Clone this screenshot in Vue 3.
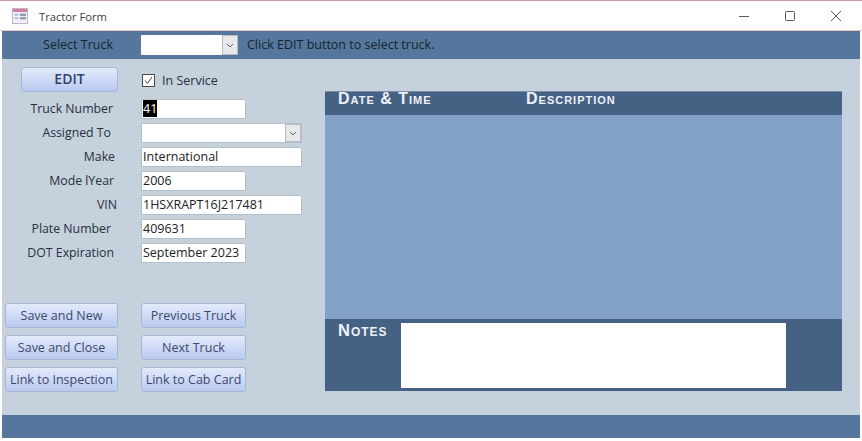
<script setup>
const fields = [
  { label: 'Truck Number', value: '41', nudge: 7, selected: true },
  { label: 'Assigned To', value: '', nudge: 9, wide: true, combo: true },
  { label: 'Make', value: 'International', nudge: 5, wide: true },
  { label: 'Mode lYear', value: '2006', nudge: 6 },
  { label: 'VIN', value: '1HSXRAPT16J217481', nudge: 3, wide: true },
  { label: 'Plate Number', value: '409631', nudge: 9 },
  { label: 'DOT Expiration', value: 'September 2023', nudge: 6 },
]

const actions = [
  ['Save and New', 'Previous Truck'],
  ['Save and Close', 'Next Truck'],
  ['Link to Inspection', 'Link to Cab Card'],
]
</script>

<template>
  <div class="window">
    <header class="titlebar">
      <svg class="app-icon" width="16" height="16" viewBox="0 0 16 16">
        <rect x="0.5" y="0.5" width="15" height="15" fill="#f1f1f5" stroke="#c4b4c6" />
        <rect x="1" y="1" width="14" height="3" fill="#cf7f9f" />
        <rect x="2.5" y="6" width="4" height="1.5" fill="#9fb6d2" />
        <rect x="2.5" y="9.5" width="4" height="1.5" fill="#9fb6d2" />
        <rect x="8" y="5.5" width="6" height="2.5" fill="#8c9fb6" />
        <rect x="8" y="9" width="6" height="2.5" fill="#8c9fb6" />
      </svg>
      <span class="title">Tractor Form</span>
      <div class="window-controls">
        <svg width="12" height="12" viewBox="0 0 12 12"><path d="M1 6.5h10" stroke="#555" fill="none" /></svg>
        <svg width="12" height="12" viewBox="0 0 12 12"><rect x="1.5" y="1.5" width="9" height="9" rx="1" stroke="#555" fill="none" /></svg>
        <svg width="12" height="12" viewBox="0 0 12 12"><path d="M1 1l10 10M11 1L1 11" stroke="#555" fill="none" /></svg>
      </div>
    </header>

    <div class="form">
      <div class="toolbar">
        <span class="select-label">Select Truck</span>
        <div class="combo combo-small">
          <span class="combo-text"></span>
          <span class="combo-arrow">
            <svg width="8" height="5" viewBox="0 0 8 5"><path d="M1 1l3 3 3-3" stroke="#666" fill="none" /></svg>
          </span>
        </div>
        <span class="hint">Click EDIT button to select truck.</span>
      </div>

      <div class="content">
        <div class="left">
          <div class="top-row">
            <button class="btn btn-edit">EDIT</button>
            <label class="check">
              <span class="checkbox">
                <svg width="11" height="11" viewBox="0 0 11 11"><path d="M2 5.5l2.5 3L9 2" stroke="#444" fill="none" /></svg>
              </span>
              In Service
            </label>
          </div>

          <div class="fields">
            <div v-for="f in fields" :key="f.label" class="field-row">
              <span class="field-label" :style="{ paddingRight: f.nudge + 'px' }">{{ f.label }}</span>
              <div v-if="f.combo" class="combo combo-wide">
                <span class="combo-text"></span>
                <span class="combo-arrow">
                  <svg width="8" height="5" viewBox="0 0 8 5"><path d="M1 1l3 3 3-3" stroke="#666" fill="none" /></svg>
                </span>
              </div>
              <div v-else class="input" :class="{ wide: f.wide }">
                <span :class="{ selected: f.selected }">{{ f.value }}</span>
              </div>
            </div>
          </div>

          <div class="actions">
            <div v-for="row in actions" :key="row[0]" class="action-row">
              <button class="btn btn-left">{{ row[0] }}</button>
              <button class="btn btn-right">{{ row[1] }}</button>
            </div>
          </div>
        </div>

        <section class="panel">
          <div class="panel-head">
            <span class="col-date">Date &amp; Time</span>
            <span>Description</span>
          </div>
          <div class="panel-body"></div>
          <div class="panel-notes">
            <span class="notes-label">Notes</span>
            <div class="notes-box"></div>
          </div>
        </section>
      </div>

      <div class="footer"></div>
    </div>
  </div>
</template>

<style scoped>
.window {
  width: 862px;
  height: 441px;
  display: flex;
  flex-direction: column;
  background: #fff;
  border-top: 1px solid #c9999f;
  box-sizing: border-box;
  font-family: "Open Sans", "Noto Sans", sans-serif;
  font-size: 12.5px;
  color: #27303c;
  overflow: hidden;
}
.titlebar {
  height: 30px;
  display: flex;
  align-items: center;
  padding-left: 12px;
  flex-shrink: 0;
  border-bottom: 1px solid #e3c5c9;
  box-sizing: border-box;
}
.title {
  margin-left: 11px;
  margin-top: 1px;
  font-size: 11.2px;
  color: #3c3c3c;
}
.window-controls {
  margin-left: auto;
  display: flex;
  gap: 34px;
  padding-right: 20px;
}
.form {
  flex: 1;
  margin: 0 2px 3px;
  display: flex;
  flex-direction: column;
  background: #c5d1dd;
}
.toolbar {
  height: 28px;
  background: #56779d;
  display: flex;
  align-items: center;
  flex-shrink: 0;
}
.select-label {
  width: 111px;
  text-align: right;
  color: #18232f;
  margin-bottom: 2px;
}
.toolbar .combo {
  margin-left: 28px;
}
.hint {
  margin-left: 9px;
  margin-bottom: 2px;
  color: #18232f;
}
.combo {
  height: 20px;
  background: #fff;
  display: flex;
  box-sizing: border-box;
}
.combo-small {
  width: 97px;
}
.combo-wide {
  width: 161px;
  border: 1px solid #b4bfca;
}
.combo-text {
  flex: 1;
}
.combo-arrow {
  width: 16px;
  background: #e6e8ea;
  border: 1px solid #b4bcc4;
  box-sizing: border-box;
  display: flex;
  align-items: center;
  justify-content: center;
}
.content {
  flex: 1;
  display: flex;
  min-height: 0;
}
.left {
  width: 323px;
  flex-shrink: 0;
}
.top-row {
  display: flex;
  align-items: center;
  margin-top: 8px;
  padding-left: 19px;
}
.btn {
  font-family: inherit;
  font-size: 12.5px;
  color: #3b4a6b;
  background: linear-gradient(#e4eafa, #b9caf1);
  border: 1px solid #a5b6d6;
  border-radius: 3px;
  padding: 0;
  height: 25px;
  box-sizing: border-box;
  white-space: nowrap;
}
.btn-edit {
  width: 97px;
  font-size: 14px;
  font-weight: 600;
  color: #2e4272;
  padding-bottom: 2px;
}
.check {
  display: flex;
  align-items: center;
  margin-left: 24px;
  margin-top: 1px;
}
.checkbox {
  width: 13px;
  height: 13px;
  margin-right: 7px;
  background: #fff;
  border: 1px solid #4a4a4a;
  box-sizing: border-box;
  display: flex;
  align-items: center;
  justify-content: center;
}
.fields {
  margin-top: 7px;
  display: flex;
  flex-direction: column;
  gap: 4px;
}
.field-row {
  display: flex;
  align-items: center;
  height: 20px;
}
.field-label {
  width: 118px;
  text-align: right;
  box-sizing: border-box;
  margin-right: 21px;
  margin-bottom: 2px;
  flex-shrink: 0;
  font-size: 12.3px;
}
.input {
  width: 105px;
  height: 20px;
  background: #fff;
  border: 1px solid #b4bfca;
  box-sizing: border-box;
  padding-left: 1px;
  line-height: 17px;
  color: #222;
}
.input.wide {
  width: 161px;
}
.selected {
  background: #000;
  color: #fff;
  display: inline-block;
  line-height: 17px;
}
.actions {
  margin-top: 40px;
  display: flex;
  flex-direction: column;
  gap: 7px;
}
.action-row {
  display: flex;
  padding-left: 3px;
}
.btn-left {
  width: 113px;
}
.btn-right {
  width: 105px;
  margin-left: 23px;
}
.panel {
  width: 517px;
  margin: 32px 0 24px 0;
  display: flex;
  flex-direction: column;
  background: #84a2c5;
  font-family: "Liberation Sans", sans-serif;
  font-variant: small-caps;
  font-weight: 700;
  color: #eef2f7;
}
.panel-head {
  height: 24px;
  background: #456285;
  border-top: 1px solid #7d8ea3;
  box-sizing: border-box;
  display: flex;
  padding: 0 0 0 13px;
  font-size: 16px;
  letter-spacing: 1px;
  line-height: 14px;
}
.col-date {
  width: 188px;
}
.panel-body {
  flex: 1;
}
.panel-notes {
  height: 72px;
  background: #456285;
  display: flex;
  padding: 4px 0 3px 13px;
  box-sizing: border-box;
  font-size: 16.5px;
  letter-spacing: 1px;
}
.notes-label {
  width: 63px;
  line-height: 15px;
}
.notes-box {
  width: 385px;
  background: #fff;
}
.footer {
  height: 23px;
  background: #56779d;
  flex-shrink: 0;
}
</style>

<style>
html, body {
  margin: 0;
  background: #fff;
}
</style>
